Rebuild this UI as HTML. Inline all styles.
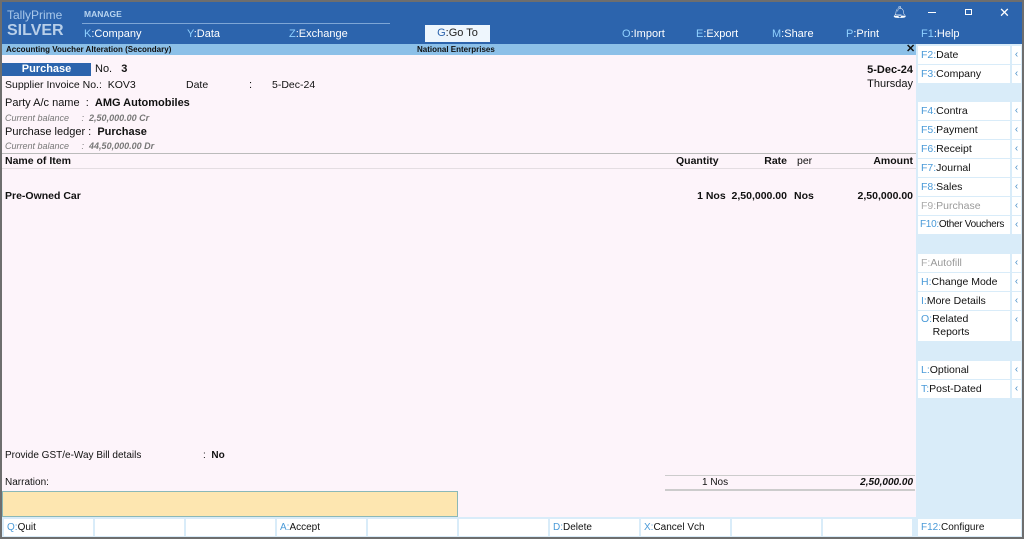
<!DOCTYPE html>
<html><head><meta charset="utf-8"><style>
*{margin:0;padding:0;box-sizing:border-box}
body{width:1024px;height:539px;overflow:hidden;background:#6e6e6e;font-family:"Liberation Sans",Arial,sans-serif;font-size:11px;color:#111;position:relative}
.a{position:absolute;white-space:nowrap}
.top{left:2px;top:2px;width:1020px;height:42px;background:#2c64ad}
.sub{left:2px;top:44px;width:914px;height:11px;background:#8cc0e8;font-size:8px;font-weight:bold;line-height:11px}
.main{left:2px;top:55px;width:914px;height:462px;background:#fdf4fa}
.rp{left:916px;top:44px;width:106px;height:493px;background:#d9ecf9}
.bb{left:2px;top:517px;width:914px;height:20px;background:#d9ecf9}
.m{color:#fff;font-size:11px;top:28px}
.k{color:#8fd0ff}
.rb{position:absolute;left:918px;width:92px;height:18px;background:#fff;font-size:10.5px;line-height:18px;padding-left:3px;white-space:nowrap}
.rb:after{content:"‹";position:absolute;left:94px;top:0;width:9px;height:100%;background:#fff;color:#4a8fc8;font-size:10px;text-align:center;line-height:18px}
.rb b{color:#4a9ad8;font-weight:normal}
.dim{color:#999}
.dim b{color:#aaa}
.fb{position:absolute;top:519px;height:17px;width:89px;background:#fff;font-size:10px;line-height:17px;padding-left:3px}
.fb b{color:#4a9ad8;font-weight:normal}
.it{font-style:italic;color:#777;font-size:9px}
.r{position:absolute;white-space:nowrap;text-align:right}
</style></head><body>
<div class="a top"></div>
<div class="a" style="left:7px;top:8px;color:#a9c8ea;font-size:12px">TallyPrime</div>
<div class="a" style="left:7px;top:22px;color:#b8cfe9;font-size:16px;font-weight:bold">SILVER</div>
<div class="a" style="left:84px;top:9px;color:#b8d4f0;font-size:8.5px;font-weight:bold">MANAGE</div>
<div class="a" style="left:82px;top:23px;width:308px;height:1px;background:#7ea6d6"></div>
<div class="a m" style="left:84px"><span class="k">K</span>:Company</div>
<div class="a m" style="left:187px"><span class="k">Y</span>:Data</div>
<div class="a m" style="left:289px"><span class="k">Z</span>:Exchange</div>
<div class="a" style="left:425px;top:25px;width:65px;height:17px;background:#eef6fd;color:#222;font-size:11px;line-height:17px;text-align:center"><span style="color:#2c64ad">G</span>:Go To</div>
<div class="a m" style="left:622px"><span class="k">O</span>:Import</div>
<div class="a m" style="left:696px"><span class="k">E</span>:Export</div>
<div class="a m" style="left:772px"><span class="k">M</span>:Share</div>
<div class="a m" style="left:846px"><span class="k">P</span>:Print</div>
<div class="a m" style="left:921px"><span class="k">F1</span>:Help</div>
<div class="a" style="left:892px;top:5px;color:#fff;font-size:12px">🔔︎</div>
<div class="a" style="left:928px;top:12px;width:8px;height:1px;background:#fff"></div>
<div class="a" style="left:965px;top:9px;width:7px;height:6px;border:1px solid #fff"></div>
<div class="a" style="left:999px;top:5px;color:#fff;font-size:13px">✕</div>
<div class="a sub"><span style="margin-left:4px">Accounting Voucher Alteration (Secondary)</span><span class="a" style="left:415px">National Enterprises</span><span class="a" style="left:904px;font-size:11px;top:0">✕</span></div>
<div class="a main"></div>
<div class="a rp"></div>
<div class="a" style="left:2px;top:63px;width:89px;height:13px;background:#2c64ad;color:#fff;font-weight:bold;text-align:center;line-height:13px">Purchase</div>
<div class="a" style="left:95px;top:63px">No. &nbsp; <b>3</b></div>
<div class="a" style="left:5px;top:79px;font-size:10.5px">Supplier Invoice No.: &nbsp;KOV3</div>
<div class="a" style="left:186px;top:79px;font-size:10.5px">Date</div>
<div class="a" style="left:249px;top:79px">:</div>
<div class="a" style="left:272px;top:79px;font-size:10.5px">5-Dec-24</div>
<div class="r" style="right:111px;top:64px;font-weight:bold">5-Dec-24</div>
<div class="r" style="right:111px;top:78px">Thursday</div>
<div class="a" style="left:5px;top:97px">Party A/c name &nbsp;: &nbsp;<b>AMG Automobiles</b></div>
<div class="a it" style="left:5px;top:113px">Current balance &nbsp; &nbsp; : &nbsp;<b>2,50,000.00 Cr</b></div>
<div class="a" style="left:5px;top:126px">Purchase ledger : &nbsp;<b>Purchase</b></div>
<div class="a it" style="left:5px;top:141px">Current balance &nbsp; &nbsp; : &nbsp;<b>44,50,000.00 Dr</b></div>
<div class="a" style="left:2px;top:153px;width:914px;height:1px;background:#bbb"></div>
<div class="a" style="left:2px;top:168px;width:914px;height:1px;background:#e4dde2"></div>
<div class="a" style="left:5px;top:155px;font-weight:bold;font-size:10.5px">Name of Item</div>
<div class="a" style="left:676px;top:155px;font-weight:bold;font-size:10.5px">Quantity</div>
<div class="r" style="right:237px;top:155px;font-weight:bold;font-size:10.5px">Rate</div>
<div class="a" style="left:797px;top:155px;font-size:10.5px">per</div>
<div class="r" style="right:111px;top:155px;font-weight:bold;font-size:10.5px">Amount</div>
<div class="a" style="left:5px;top:190px;font-weight:bold;font-size:10.5px">Pre-Owned Car</div>
<div class="r" style="right:237px;top:190px;font-weight:bold;font-size:10.5px">1 Nos &nbsp;2,50,000.00</div>
<div class="a" style="left:794px;top:190px;font-weight:bold;font-size:10.5px">Nos</div>
<div class="r" style="right:111px;top:190px;font-weight:bold;font-size:10.5px">2,50,000.00</div>
<div class="a" style="left:5px;top:450px;font-size:10px">Provide GST/e-Way Bill details</div>
<div class="a" style="left:203px;top:450px;font-size:10px">: &nbsp;<b>No</b></div>
<div class="a" style="left:5px;top:477px;font-size:10px">Narration:</div>
<div class="a" style="left:665px;top:475px;width:250px;height:1px;background:#ccc"></div>
<div class="a" style="left:665px;top:489px;width:250px;height:2px;background:#ccc"></div>
<div class="a" style="left:702px;top:477px;font-size:10px">1 Nos</div>
<div class="r" style="right:111px;top:477px;font-size:10px;font-style:italic;font-weight:bold">2,50,000.00</div>
<div class="a" style="left:2px;top:491px;width:456px;height:26px;background:#fde6b0;border:1px solid #8ab8b8"></div>
<div class="a bb"></div>

<div class="rb" style="top:46px"><b>F2:</b>Date</div>
<div class="rb" style="top:65px"><b>F3:</b>Company</div>
<div class="rb" style="top:102px"><b>F4:</b>Contra</div>
<div class="rb" style="top:121px"><b>F5:</b>Payment</div>
<div class="rb" style="top:140px"><b>F6:</b>Receipt</div>
<div class="rb" style="top:159px"><b>F7:</b>Journal</div>
<div class="rb" style="top:178px"><b>F8:</b>Sales</div>
<div class="rb dim" style="top:197px"><b>F9:</b>Purchase</div>
<div class="rb" style="top:216px;font-size:10px;letter-spacing:-0.3px;padding-left:2px"><b>F10:</b>Other Vouchers</div>
<div class="rb dim" style="top:254px"><b>F:</b>Autofill</div>
<div class="rb" style="top:273px"><b>H:</b>Change Mode</div>
<div class="rb" style="top:292px"><b>I:</b>More Details</div>
<div class="rb" style="top:311px;height:30px;line-height:13px;padding-top:2px"><b>O:</b>Related<br>&nbsp; &nbsp; Reports</div>
<div class="rb" style="top:361px"><b>L:</b>Optional</div>
<div class="rb" style="top:380px"><b>T:</b>Post-Dated</div>

<div class="fb" style="left:4px"><b>Q:</b>Quit</div>
<div class="fb" style="left:95px"></div>
<div class="fb" style="left:186px"></div>
<div class="fb" style="left:277px"><b>A:</b>Accept</div>
<div class="fb" style="left:368px"></div>
<div class="fb" style="left:459px"></div>
<div class="fb" style="left:550px"><b>D:</b>Delete</div>
<div class="fb" style="left:641px"><b>X:</b>Cancel Vch</div>
<div class="fb" style="left:732px"></div>
<div class="fb" style="left:823px"></div>
<div class="fb" style="left:918px;width:103px"><b>F12:</b>Configure</div>
</body></html>
